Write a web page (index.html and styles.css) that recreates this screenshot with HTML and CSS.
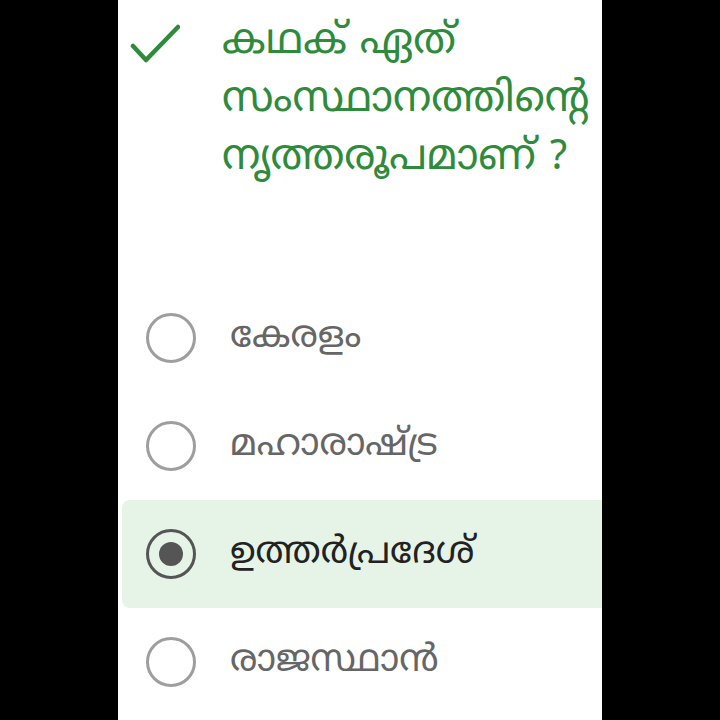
FILE: index.html
```html
<!DOCTYPE html>
<html>
<head>
<meta charset="UTF-8">
<title>Quiz</title>
<link rel="stylesheet" href="styles.css">
</head>
<body>
    <div id="page">
        <div id="question" class="question">
            <svg class="check" width="50" height="40" viewBox="0 0 50 40">
                <path d="M3 22 L16 36 L48 3" fill="none" stroke="#2e8b3c" stroke-width="4.5" stroke-linecap="round" stroke-linejoin="round"/>
            </svg>
            <p>കഥക് ഏത് സംസ്ഥാനത്തിന്റെ നൃത്തരൂപമാണ് ?</p>
        </div>
        <div id="options">
            <div class="option">
                <span class="radio"></span>
                <span class="label">കേരളം</span>
            </div>
            <div class="option">
                <span class="radio"></span>
                <span class="label">മഹാരാഷ്ട്ര</span>
            </div>
            <div class="option selected">
                <span class="radio"></span>
                <span class="label">ഉത്തർപ്രദേശ്</span>
            </div>
            <div class="option">
                <span class="radio"></span>
                <span class="label">രാജസ്ഥാൻ</span>
            </div>
        </div>
    </div>
</body>
</html>
```

FILE: styles.css
```css
* {
margin: 0;
padding: 0;
box-sizing: border-box;
}

html, body {
background-color: #000;
height: 100%;
font-family: "Noto Sans Malayalam", "Noto Sans", sans-serif;
}

#page {
width: 484px;
height: 100%;
margin: 0 auto;
background-color: #fff;
overflow: hidden;
}

.question {
display: flex;
align-items: flex-start;
padding: 14px 8px 0 12px;
height: 284px;
}

.check {
flex: none;
margin-top: 10px;
}

.question p {
margin-left: 42px;
color: #2e8b3c;
font-size: 42px;
line-height: 58px;
}

#options {
padding-left: 4px;
}

.option {
display: flex;
align-items: center;
height: 108px;
padding-left: 24px;
border-radius: 8px 0 0 8px;
}

.radio {
flex: none;
width: 50px;
height: 50px;
border: 3px solid #9e9e9e;
border-radius: 50%;
display: flex;
align-items: center;
justify-content: center;
}

.label {
margin-left: 34px;
font-size: 37px;
color: #666;
}

.selected {
background-color: #e6f4e8;
}

.selected .radio {
border-color: #555;
}

.selected .radio::after {
content: "";
width: 24px;
height: 24px;
border-radius: 50%;
background-color: #555;
}

.selected .label {
color: #222;
}
```
